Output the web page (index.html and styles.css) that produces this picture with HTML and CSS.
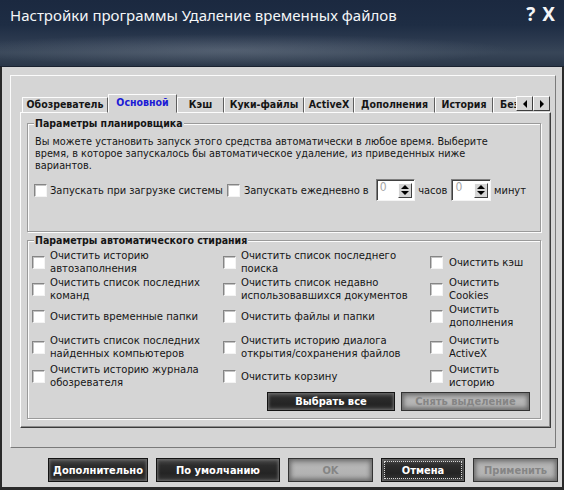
FILE: index.html
```html
<!DOCTYPE html>
<html lang="ru">
<head>
<meta charset="utf-8">
<title>Настройки</title>
<link rel="stylesheet" href="styles.css">
</head>
<body>
<div class="window">
  <header class="titlebar">
    <div class="title">Настройки программы Удаление временных файлов</div>
    <div class="caption-btns"><span>?</span><span>X</span></div>
  </header>
  <main class="client">
    <div class="frame">
      <div class="tabrow">
        <div class="tabs">
          <div class="tab t1">Обозреватель</div>
          <div class="tab t2 active">Основной</div>
          <div class="tab t3">Кэш</div>
          <div class="tab t4">Куки-файлы</div>
          <div class="tab t5">ActiveX</div>
          <div class="tab t6">Дополнения</div>
          <div class="tab t7">История</div>
          <div class="tab t8">Безопасность</div>
        </div>
        <div class="scroller">
          <span class="arr"><span class="tri-left"></span></span>
          <span class="arr"><span class="tri-right"></span></span>
        </div>
      </div>
      <div class="pane">
        <fieldset class="group g1">
          <legend>Параметры планировщика</legend>
          <p class="desc">Вы можете установить запуск этого средства автоматически в любое время. Выберите<br>время, в которое запускалось бы автоматическое удаление, из приведенных ниже<br>вариантов.</p>
          <div class="sched">
            <span class="box"></span><span class="lbl l1">Запускать при загрузке системы</span>
            <span class="box"></span><span class="lbl l2">Запускать ежедневно в</span>
            <span class="spin"><span class="val">0</span><span class="updown"><span class="up"></span><span class="down"></span></span></span>
            <span class="unit">часов</span>
            <span class="spin"><span class="val">0</span><span class="updown"><span class="up"></span><span class="down"></span></span></span>
            <span class="unit">минут</span>
          </div>
        </fieldset>
        <fieldset class="group g2">
          <legend>Параметры автоматического стирания</legend>
          <div class="grid">
            <div class="item"><span class="box"></span><span class="lbl">Очистить историю<br>автозаполнения</span></div>
            <div class="item"><span class="box"></span><span class="lbl">Очистить список последнего<br>поиска</span></div>
            <div class="item c3"><span class="box"></span><span class="lbl">Очистить кэш</span></div>

            <div class="item"><span class="box"></span><span class="lbl">Очистить список последних<br>команд</span></div>
            <div class="item"><span class="box"></span><span class="lbl">Очистить список недавно<br>использовавшихся документов</span></div>
            <div class="item c3"><span class="box"></span><span class="lbl">Очистить<br>Cookies</span></div>

            <div class="item"><span class="box"></span><span class="lbl">Очистить временные папки</span></div>
            <div class="item"><span class="box"></span><span class="lbl">Очистить файлы и папки</span></div>
            <div class="item c3"><span class="box"></span><span class="lbl">Очистить<br>дополнения</span></div>

            <div class="item"><span class="box"></span><span class="lbl">Очистить список последних<br>найденных компьютеров</span></div>
            <div class="item"><span class="box"></span><span class="lbl">Очистить историю диалога<br>открытия/сохранения файлов</span></div>
            <div class="item c3"><span class="box"></span><span class="lbl">Очистить<br>ActiveX</span></div>

            <div class="item"><span class="box"></span><span class="lbl">Очистить историю журнала<br>обозревателя</span></div>
            <div class="item"><span class="box"></span><span class="lbl">Очистить корзину</span></div>
            <div class="item c3"><span class="box"></span><span class="lbl">Очистить<br>историю</span></div>
          </div>
          <div class="actions">
            <button class="btn dark sel">Выбрать все</button>
            <button class="btn light sel">Снять выделение</button>
          </div>
        </fieldset>
      </div>
    </div>
    <div class="buttons">
      <button class="btn dark b-more">Дополнительно</button>
      <button class="btn dark b-def">По умолчанию</button>
      <button class="btn light b-ok">OK</button>
      <button class="btn dark b-cancel">Отмена</button>
      <button class="btn light b-apply">Применить</button>
    </div>
  </main>
</div>
</body>
</html>
```

FILE: styles.css
```css
* { box-sizing: border-box; }
html, body { margin: 0; padding: 0; }
body {
  width: 564px;
  height: 490px;
  overflow: hidden;
  background: #d5d5d5;
  font-family: "DejaVu Sans Condensed", "DejaVu Sans", sans-serif;
  font-size: 11px;
  color: #151515;
}
.window { width: 564px; height: 490px; display: flex; flex-direction: column; }

/* title bar */
.titlebar {
  height: 67px;
  flex: none;
  display: flex;
  justify-content: space-between;
  align-items: flex-start;
  padding: 4px 9px 0 10px;
  color: #f4f6f8;
  background:
    radial-gradient(ellipse 280px 16px at 230px 50px, rgba(130,140,155,0.38), rgba(130,140,155,0)),
    linear-gradient(180deg, #1b2940 0%, #1e2d44 38%, #2c3a4f 62%, #384658 80%, #2a3749 100%);
  border-bottom: 1px solid #1a2230;
}
.title {
  font-family: "Noto Sans", "Open Sans", sans-serif;
  font-size: 15px;
  line-height: 22px;
}
.caption-btns {
  font-family: "Noto Sans", "DejaVu Sans", sans-serif;
  font-weight: bold;
  font-size: 19px;
  line-height: 20px;
  display: flex;
  gap: 7px;
}

/* client */
.client {
  flex: 1;
  background: #d5d5d5;
  border: 2px solid #2a2a2a;
  border-top: none;
  border-bottom-width: 3px;
  padding: 8px 6px 0 8px;
}
.frame {
  border: 1px solid;
  border-color: #fbfbfb #7a7a7a #7a7a7a #fbfbfb;
  padding: 18px 4px 19px 9px;
}

/* tabs */
.tabrow {
  display: flex;
  align-items: flex-end;
  height: 19px;
  margin-bottom: -1px;
  position: relative;
  z-index: 1;
  padding: 0 1px 0 2px;
}
.tabs {
  flex: 1;
  display: flex;
  align-items: flex-end;
  height: 19px;
  overflow: hidden;
}
.tab {
  flex: none;
  height: 16px;
  border: 1px solid;
  border-color: #fcfcfc #5e5e5e #fcfcfc #fcfcfc;
  background: #d5d5d5;
  font-weight: bold;
  font-size: 10.5px;
  line-height: 13px;
  text-align: center;
  white-space: nowrap;
  color: #151515;
}
.tab.active {
  height: 19px;
  line-height: 15px;
  color: #1b1bd6;
  border-bottom-color: #d5d5d5;
}
.t1 { width: 86px; }
.t2 { width: 69px; }
.t3 { width: 47px; }
.t4 { width: 80px; }
.t5 { width: 50px; }
.t6 { width: 81px; }
.t7 { width: 58px; }
.t8 { width: 90px; text-align: left; padding-left: 6px; }

.scroller { display: flex; margin-bottom: 2px; }
.arr {
  width: 17px;
  height: 15px;
  border: 1px solid;
  border-color: #fcfcfc #3e3e3e #3e3e3e #fcfcfc;
  background: #d5d5d5;
  display: flex;
  align-items: center;
  justify-content: center;
}
.tri-left { width: 0; height: 0; border-top: 4px solid transparent; border-bottom: 4px solid transparent; border-right: 4px solid #000; }
.tri-right { width: 0; height: 0; border-top: 4px solid transparent; border-bottom: 4px solid transparent; border-left: 4px solid #000; }

/* pane */
.pane {
  border: 1px solid;
  border-color: #fcfcfc #3a3a3a #3a3a3a #fcfcfc;
  box-shadow: inset -1px -1px 0 #8c8c8c;
  padding: 0 9px 8px 6px;
}

/* group boxes */
.group {
  margin: 0;
  min-inline-size: 0;
  border: 1px solid #9a9a9a;
  box-shadow: 1px 1px 0 #fcfcfc, inset 1px 1px 0 #fcfcfc;
  padding: 6px 10px 0 7px;
}
.group legend {
  padding: 0 1px;
  margin-left: -1px;
  font-weight: bold;
  font-size: 10.5px;
  line-height: 13px;
  background: #d5d5d5;
}
.g1 { margin-top: 4px; padding-bottom: 30px; }
.g2 { margin-top: 2px; padding-top: 2px; padding-bottom: 7px; }

.desc { margin: 0; line-height: 12px; white-space: nowrap; font-size: 10.8px; }

.box {
  flex: none;
  width: 13px;
  height: 13px;
  background: #fff;
  border: 1px solid;
  border-color: #858585 #f4f4f4 #f4f4f4 #858585;
  box-shadow: inset 1px 1px 0 #c4c4c4;
}

.sched {
  margin-top: 7px;
  height: 22px;
  display: flex;
  align-items: center;
  white-space: nowrap;
}
.sched .box:first-child { margin-left: -1px; }
.sched .lbl { margin-left: 3px; }
.sched .l1 { margin-right: 4px; }
.sched .l2 { margin-left: 4px; margin-right: 7px; }
.unit { margin: 0 4px 0 3px; }

.spin {
  width: 40px;
  height: 22px;
  display: flex;
  align-items: center;
  background: #fff;
  border: 1px solid;
  border-color: #7e7e7e #f4f4f4 #f4f4f4 #7e7e7e;
  box-shadow: inset 1px 1px 0 #404040;
  padding: 1px 2px 1px 3px;
}
.val {
  flex: 1;
  align-self: flex-start;
  color: #a6a6a6;
  font-size: 12px;
  line-height: 12px;
}
.updown {
  width: 14px;
  height: 15px;
  background: #d5d5d5;
  border: 1px solid;
  border-color: #fcfcfc #404040 #404040 #fcfcfc;
  display: flex;
  flex-direction: column;
  align-items: center;
  justify-content: space-around;
  padding: 1px 0;
}
.up { width: 0; height: 0; border-left: 4px solid transparent; border-right: 4px solid transparent; border-bottom: 4px solid #000; }
.down { width: 0; height: 0; border-left: 4px solid transparent; border-right: 4px solid transparent; border-top: 4px solid #000; }

.grid {
  display: grid;
  grid-template-columns: 191px 207px 1fr;
  grid-template-rows: 27px 27px 31px 29px 26px;
  margin-left: -3px;
}
.item {
  height: 26px;
  display: flex;
  align-items: center;
  font-size: 11.2px;
  line-height: 13px;
  white-space: nowrap;
}
.item .lbl { margin-left: 5px; }
.item.c3 .lbl { margin-left: 6px; }

.actions {
  display: flex;
  justify-content: flex-end;
  gap: 6px;
  margin-top: 3px;
}

/* buttons */
.btn {
  height: 24px;
  padding: 0;
  font-family: "DejaVu Sans Condensed", "DejaVu Sans", sans-serif;
  font-weight: bold;
  font-size: 11px;
  border: 1px solid #141414;
  cursor: default;
}
.btn.dark {
  color: #fff;
  background: linear-gradient(180deg, #4a4a4a 0%, #2c2c2c 30%, #242424 65%, #353535 100%);
  box-shadow: inset 0 0 3px 1px #6e6e6e;
}
.btn.light {
  color: #858585;
  background: linear-gradient(180deg, #a6a6a6 0%, #b6b6b6 40%, #b2b2b2 70%, #a2a2a2 100%);
  box-shadow: inset 0 0 4px 2px #6c6c6c;
  border-color: #333;
}
.btn.sel { height: 19px; width: 128px; font-size: 11px; }
.btn.light.sel { width: 129px; }

.buttons {
  display: flex;
  justify-content: flex-end;
  gap: 8px;
  margin-top: 10px;
  margin-right: -2px;
}
.b-more { width: 100px; }
.b-def { width: 124px; }
.b-ok { width: 85px; }
.b-cancel { width: 84px; outline: 1px dotted #d8d8d8; outline-offset: -4px; }
.b-apply { width: 85px; }
```
